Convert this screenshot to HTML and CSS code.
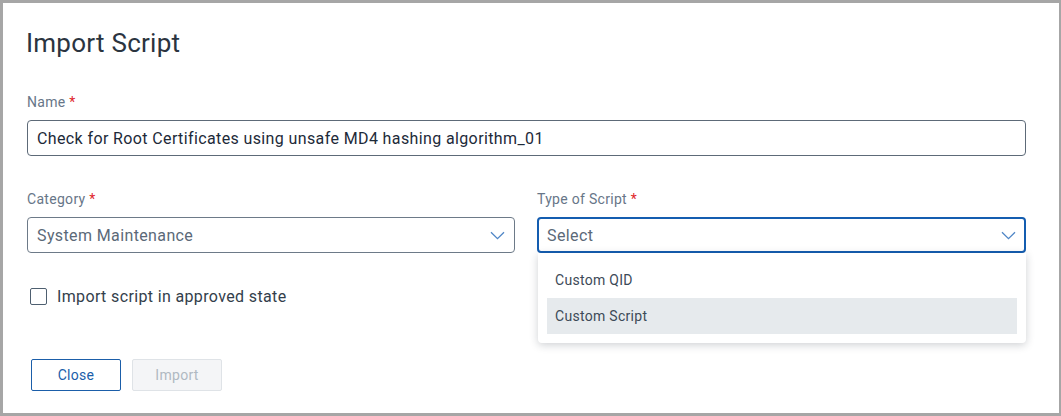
FILE: index.html
```html
<!DOCTYPE html>
<html lang="en">
<head>
<meta charset="utf-8">
<title>Import Script</title>
<link rel="stylesheet" href="styles.css">
</head>
<body>
<div class="frame">
  <h1 class="title">Import Script</h1>

  <div class="field">
    <label class="label">Name <span class="req">*</span></label>
    <div class="input">Check for Root Certificates using unsafe MD4 hashing algorithm_01</div>
  </div>

  <div class="row">
    <div class="field">
      <label class="label">Category <span class="req">*</span></label>
      <div class="select">
        <span class="select-value">System Maintenance</span>
        <svg class="chevron" width="15" height="9" viewBox="0 0 15 9"><path d="M1 1.2l6.5 6.5 6.5-6.5" fill="none" stroke="#4f86c6" stroke-width="1.3"/></svg>
      </div>
    </div>
    <div class="field dd-wrap">
      <label class="label">Type of Script <span class="req">*</span></label>
      <div class="select focused">
        <span class="select-value">Select</span>
        <svg class="chevron" width="15" height="9" viewBox="0 0 15 9"><path d="M1 1.2l6.5 6.5 6.5-6.5" fill="none" stroke="#4f86c6" stroke-width="1.3"/></svg>
      </div>
      <div class="menu">
        <div class="option">Custom QID</div>
        <div class="option active">Custom Script</div>
      </div>
    </div>
  </div>

  <label class="check">
    <span class="box"></span>
    <span class="check-label">Import script in approved state</span>
  </label>

  <div class="actions">
    <button class="btn btn-outline">Close</button>
    <button class="btn btn-disabled">Import</button>
  </div>
</div>
</body>
</html>
```

FILE: styles.css
```css
* { box-sizing: border-box; }
html, body { margin: 0; padding: 0; background: #ffffff; }
body { font-family: Roboto, "Liberation Sans", sans-serif; letter-spacing: 0.3px; }

.frame {
  width: 1061px;
  height: 416px;
  border-style: solid;
  border-color: #a6a6a6;
  border-width: 3px 2px 3px 3px;
  padding: 24px 33px 0 24px;
  overflow: hidden;
}

.title {
  margin: 0 0 0 -1px;
  font-size: 26px;
  line-height: 32px;
  font-weight: 400;
  color: #2b3440;
  letter-spacing: 0.25px;
}

.field { display: flex; flex-direction: column; position: relative; }
.title + .field { margin-top: 33px; }

.label {
  font-size: 14px;
  line-height: 20px;
  color: #677688;
  margin-bottom: 8px;
}
.req { color: #e0262b; }

.input {
  height: 36px;
  border: 1px solid #5d6a78;
  border-radius: 4px;
  padding: 0 9px;
  display: flex;
  align-items: center;
  font-size: 16px;
  letter-spacing: 0.38px;
  color: #1d2a39;
}

.row {
  display: grid;
  grid-template-columns: 488px 489px;
  column-gap: 22px;
  margin-top: 33px;
}

.select {
  height: 36px;
  border: 1px solid #6d7a88;
  border-radius: 4px;
  padding: 0 9px 0 9px;
  display: flex;
  align-items: center;
  justify-content: space-between;
  font-size: 16px;
  letter-spacing: 0.38px;
  color: #5b6978;
}
.select.focused {
  border: 2px solid #145db0;
  padding: 0 8px 0 8px;
}
.chevron { display: block; }

.menu {
  position: absolute;
  top: 64px;
  left: 1px;
  right: 0;
  background: #ffffff;
  border-radius: 0 0 4px 4px;
  box-shadow: 0 2px 8px rgba(30, 40, 55, 0.22);
  padding: 9px;
  z-index: 5;
}
.option {
  height: 36px;
  display: flex;
  align-items: center;
  padding-left: 8px;
  font-size: 14px;
  color: #3d4a58;
}
.option.active { background: #e6eaed; }

.check {
  display: flex;
  align-items: center;
  height: 24px;
  margin-top: 31px;
  margin-left: 3px;
}
.box {
  width: 17px;
  height: 17px;
  border: 1.5px solid #4e5f70;
  border-radius: 2px;
  background: #fff;
}
.check-label {
  margin-left: 10px;
  font-size: 16px;
  letter-spacing: 0.36px;
  color: #333e4b;
}

.actions {
  display: flex;
  gap: 11px;
  margin-top: 51px;
  margin-left: 4px;
}
.btn {
  width: 90px;
  height: 32px;
  border-radius: 2px;
  font-family: Roboto, "Liberation Sans", sans-serif;
  font-size: 14px;
  letter-spacing: 0.3px;
  padding: 0;
}
.btn-outline {
  background: #ffffff;
  border: 1px solid #1b5ea9;
  color: #1b5ea9;
}
.btn-disabled {
  background: #f4f5f7;
  border: 1px solid #dfe3e7;
  color: #b0b9c2;
}
```
